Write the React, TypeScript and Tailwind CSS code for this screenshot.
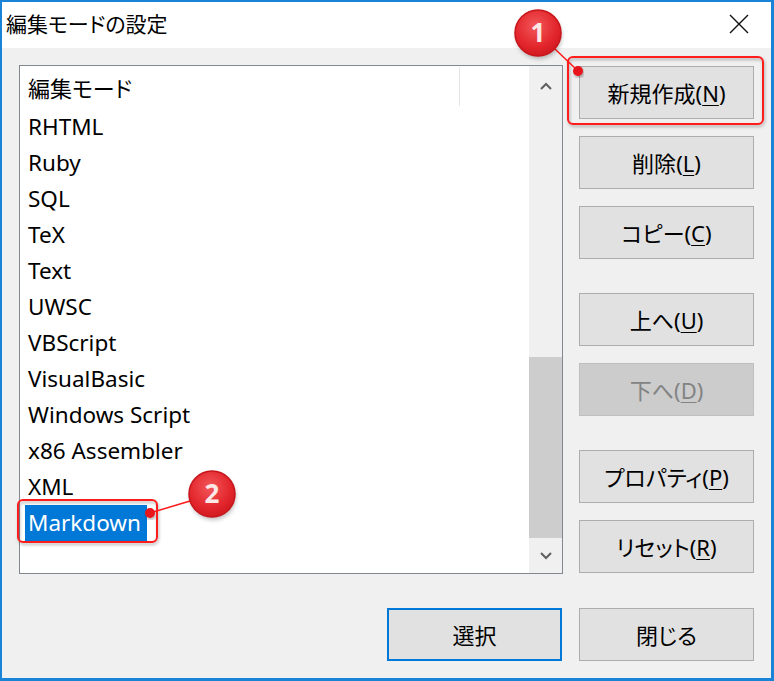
import React from "react";

const font = { fontFamily: '"Noto Sans", "Noto Sans CJK JP", sans-serif' };

const items = [
  "RHTML",
  "Ruby",
  "SQL",
  "TeX",
  "Text",
  "UWSC",
  "VBScript",
  "VisualBasic",
  "Windows Script",
  "x86 Assembler",
  "XML",
];

function Btn({
  label,
  mn,
  disabled,
  primary,
  className = "",
}: {
  label: string;
  mn?: string;
  disabled?: boolean;
  primary?: boolean;
  className?: string;
}) {
  const base = disabled
    ? "bg-[#cccccc] border border-[#bfbfbf] text-[#838383]"
    : primary
    ? "bg-[#e1e1e1] border-2 border-[#0078d7] text-black"
    : "bg-[#e1e1e1] border border-[#adadad] text-black";
  return (
    <div
      className={`w-[175px] h-[53px] flex items-center justify-center text-[22px] leading-none ${base} ${className}`}
    >
      <span>
        {label}
        {mn && (
          <>
            (<span className="underline underline-offset-[3px] decoration-1">{mn}</span>)
          </>
        )}
      </span>
    </div>
  );
}

function Badge({ cx, cy, n }: { cx: number; cy: number; n: string }) {
  return (
    <g>
      <circle cx={cx + 1} cy={cy + 3} r={23} fill="rgba(0,0,0,0.25)" filter="url(#blur)" />
      <circle cx={cx} cy={cy} r={23} fill="url(#rg)" stroke="#c8141b" strokeWidth={1.5} />
      <text
        x={cx}
        y={cy + 9}
        textAnchor="middle"
        fontSize={26}
        fontWeight={700}
        fill="#fde8e8"
        style={{ fontFamily: '"Noto Sans", sans-serif' }}
      >
        {n}
      </text>
    </g>
  );
}

export default function App() {
  return (
    <div className="relative w-[774px] h-[681px] [font-feature-settings:'palt']" style={font}>
      <div className="w-full h-full flex flex-col border-l-2 border-t-2 border-r-[3px] border-b-[3px] border-[#1883d7] bg-[#f0f0f0]">
        {/* Title bar */}
        <div className="h-[46px] bg-white flex items-center justify-between pl-[4px] pr-[22px]">
          <span className="text-[21px] text-black leading-none mt-[-2px]">編集モードの設定</span>
          <svg width="20" height="20" viewBox="0 0 20 20" className="mt-[-2px]">
            <path d="M1 1 L19 19 M19 1 L1 19" stroke="#111" strokeWidth="1.4" fill="none" />
          </svg>
        </div>
        {/* Body */}
        <div className="flex-1 flex flex-col pl-[17px] pr-[17px] pt-[17px]">
          <div className="flex gap-[16px]">
            {/* List */}
            <div className="w-[544px] h-[509px] border border-[#828790] bg-white flex">
              <div className="flex-1 flex flex-col">
                <div className="h-[43px] flex items-center relative">
                  <span className="pl-[8px] text-[22px] leading-none">編集モード</span>
                  <div className="absolute left-[439px] top-[1px] w-px h-[39px] bg-[#e5e5e5]" />
                </div>
                {items.map((t) => (
                  <div key={t} className="h-[36px] flex items-center pl-[8px] text-[22.5px] leading-none text-black">
                    {t}
                  </div>
                ))}
                <div className="h-[36px] flex items-center pl-[5px]">
                  <span className="bg-[#0078d7] text-white text-[22.5px] leading-none h-[36px] flex items-center pl-[3px] pr-[6px]">
                    Markdown
                  </span>
                </div>
              </div>
              {/* Scrollbar */}
              <div className="w-[33px] bg-[#f0f0f0] flex flex-col">
                <div className="h-[40px] flex items-center justify-center">
                  <svg width="12" height="8" viewBox="0 0 12 8">
                    <path d="M1 7 L6 2 L11 7" stroke="#606060" strokeWidth="2" fill="none" />
                  </svg>
                </div>
                <div className="flex-1 flex flex-col">
                  <div className="h-[251px]" />
                  <div className="h-[181px] bg-[#cdcdcd]" />
                </div>
                <div className="h-[34px] flex items-center justify-center">
                  <svg width="12" height="8" viewBox="0 0 12 8">
                    <path d="M1 1 L6 6 L11 1" stroke="#606060" strokeWidth="2" fill="none" />
                  </svg>
                </div>
              </div>
            </div>
            {/* Button column */}
            <div className="flex flex-col pt-[1px]">
              <Btn label="新規作成" mn="N" />
              <Btn label="削除" mn="L" className="mt-[17px]" />
              <Btn label="コピー" mn="C" className="mt-[17px]" />
              <Btn label="上へ" mn="U" className="mt-[34px]" />
              <Btn label="下へ" mn="D" disabled className="mt-[17px]" />
              <Btn label="プロパティ" mn="P" className="mt-[34px]" />
              <Btn label="リセット" mn="R" className="mt-[17px]" />
            </div>
          </div>
          <div className="flex justify-end gap-[17px] mt-[34px]">
            <Btn label="選択" primary />
            <Btn label="閉じる" />
          </div>
        </div>
      </div>
      {/* Annotations overlay */}
      <svg className="absolute inset-0 pointer-events-none" width="774" height="681" viewBox="0 0 774 681">
        <defs>
          <radialGradient id="rg" cx="45%" cy="35%" r="65%">
            <stop offset="0%" stopColor="#f2575a" />
            <stop offset="70%" stopColor="#e2262c" />
            <stop offset="100%" stopColor="#d11a20" />
          </radialGradient>
          <filter id="blur" x="-50%" y="-50%" width="200%" height="200%">
            <feGaussianBlur stdDeviation="2" />
          </filter>
          <filter id="sh" x="-10%" y="-10%" width="120%" height="130%">
            <feDropShadow dx="1" dy="2" stdDeviation="1.5" floodColor="#000" floodOpacity="0.3" />
          </filter>
        </defs>
        <rect x="568" y="57" width="195" height="67" rx="5" fill="none" stroke="#ff1a1a" strokeWidth="2" filter="url(#sh)" />
        <rect x="18" y="500" width="139" height="42" rx="5" fill="none" stroke="#ff1a1a" strokeWidth="2" filter="url(#sh)" />
        <line x1="555" y1="49" x2="578" y2="71" stroke="#ff1a1a" strokeWidth="1.5" />
        <line x1="150" y1="513" x2="190" y2="501" stroke="#ff1a1a" strokeWidth="1.5" />
        <circle cx="578" cy="71" r="5" fill="#e8141b" filter="url(#sh)" />
        <circle cx="150" cy="513" r="5" fill="#e8141b" filter="url(#sh)" />
        <Badge cx={538} cy={33} n="1" />
        <Badge cx={212} cy={494} n="2" />
      </svg>
    </div>
  );
}
